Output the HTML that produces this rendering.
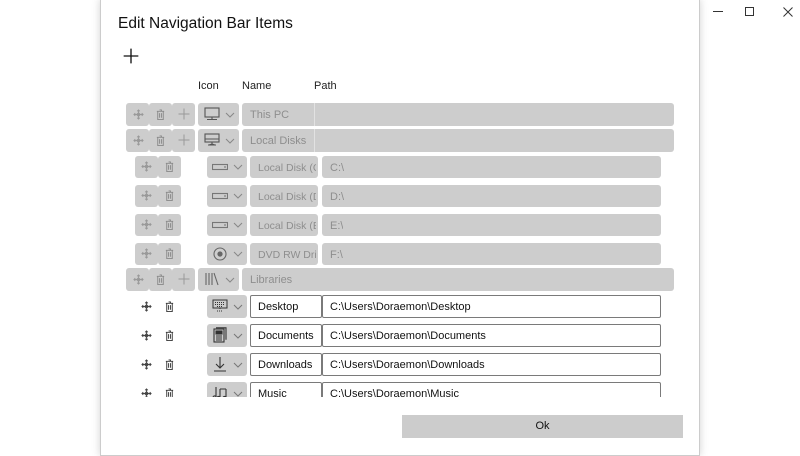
<!DOCTYPE html>
<html><head><meta charset="utf-8">
<style>
*{margin:0;padding:0;box-sizing:border-box}
html,body{width:800px;height:456px;overflow:hidden}
body{background:#fff;position:relative;font-family:"Segoe UI","Liberation Sans",sans-serif}
.dlg{position:absolute;left:100px;top:-1px;width:600px;height:457px;background:#fff;border:1px solid #ccc;box-shadow:0 0 8px rgba(0,0,0,.18)}
.a{position:absolute}
.g{position:absolute;background:#cdcdcd;border-radius:3px}
.t{position:absolute;font-size:11px;color:#8e8e8e;white-space:nowrap;overflow:hidden}
.w{position:absolute;background:#fff;border:1px solid #7a7a7a;border-radius:2px;font-size:11px;color:#111;padding-left:7px;line-height:23px;white-space:nowrap;overflow:hidden}
svg{position:absolute}
.hd{position:absolute;font-size:11px;color:#222}
</style></head><body>
<svg width="0" height="0" style="position:absolute">
<defs>
<symbol id="mv" viewBox="0 0 12 12"><g fill="none" stroke="currentColor" stroke-width="1"><path d="M6 1v10M1 6h10M4.5 2.5L6 1l1.5 1.5M4.5 9.5L6 11l1.5-1.5M2.5 4.5L1 6l1.5 1.5M9.5 4.5L11 6l-1.5 1.5"/><circle cx="6" cy="6" r="1.6"/></g></symbol>
<symbol id="tr" viewBox="0 0 12 12"><g fill="none" stroke="currentColor" stroke-width="1"><path d="M3 2.5h6v9H3zM2 2.5h8M5 1h2v1.5M5 4.5v5M7 4.5v5"/></g></symbol>
<symbol id="pl" viewBox="0 0 12 12"><path d="M6 0.5v11M0.5 6h11" stroke="currentColor" stroke-width="1" fill="none"/></symbol>
<symbol id="cv" viewBox="0 0 10 6"><path d="M1 1l4 4 4-4" stroke="currentColor" stroke-width="1" fill="none"/></symbol>
<symbol id="pc" viewBox="0 0 16 14"><g fill="none" stroke="currentColor" stroke-width="1.1"><rect x="1" y="1" width="14" height="9"/><path d="M8 10v2M3 12.5h10"/></g></symbol>
<symbol id="ld" viewBox="0 0 16 14"><g fill="none" stroke="currentColor" stroke-width="1.1"><rect x="1" y="1" width="14" height="8"/><path d="M1 6h14M8 9v2M4 12h8M8 11l-3 1M8 11l3 1"/></g></symbol>
<symbol id="hd" viewBox="0 0 16 8"><g fill="none" stroke="currentColor" stroke-width="1.1"><rect x="0.5" y="1.5" width="15" height="5"/><path d="M12 4h2"/></g></symbol>
<symbol id="dv" viewBox="0 0 14 14"><circle cx="7" cy="7" r="6" fill="none" stroke="currentColor" stroke-width="1.1"/><circle cx="7" cy="7" r="2.6" fill="currentColor"/></symbol>
<symbol id="lb" viewBox="0 0 16 14"><g fill="none" stroke="currentColor" stroke-width="1.1"><path d="M2 1v12M5 1v12M8 1v12M10 1l4 12"/></g></symbol>
<symbol id="kb" viewBox="0 0 16 14"><g fill="none" stroke="#333" stroke-width="1"><rect x="1" y="1" width="14" height="8"/><path d="M3 3.5h10M3 5.5h10M5 7.5h6M8 9v2M5 12h6" stroke-dasharray="1 1"/></g></symbol>
<symbol id="dc" viewBox="0 0 14 16"><g fill="none" stroke="#333" stroke-width="1.1"><rect x="1" y="2" width="10" height="13"/><path d="M3 0.8h10v12"/><rect x="3" y="4" width="6" height="3" fill="#333"/><path d="M3 9h6M3 11h6M3 13h6"/></g></symbol>
<symbol id="dl" viewBox="0 0 14 16"><g fill="none" stroke="#333" stroke-width="1.1"><path d="M7 1v11M3 8l4 4 4-4M1 15h12"/></g></symbol>
<symbol id="mu" viewBox="0 0 16 16"><g fill="none" stroke="#333" stroke-width="1.1"><path d="M4 2v10M8 4v9M14 4v9M8 4h6"/><circle cx="2.6" cy="12.5" r="1.6"/><circle cx="6.6" cy="13" r="1.6"/><circle cx="12.6" cy="13" r="1.6"/></g></symbol>
</defs></svg>

<div class="dlg"></div>
<div class="a" style="left:118px;top:15px;font-size:15.5px;color:#111">Edit Navigation Bar Items</div>
<svg style="left:123px;top:48px;color:#111" width="16" height="16"><use href="#pl"/></svg>
<div class="hd" style="left:198px;top:80px">Icon</div>
<div class="hd" style="left:242px;top:80px">Name</div>
<div class="hd" style="left:314px;top:80px">Path</div>

<!-- This PC -->
<div class="g" style="left:126px;top:103px;width:23px;height:23px"></div>
<div class="g" style="left:149px;top:103px;width:23px;height:23px"></div>
<div class="g" style="left:172px;top:103px;width:23px;height:23px"></div>
<svg style="left:133px;top:109px;color:#999" width="11" height="11"><use href="#mv"/></svg>
<svg style="left:155px;top:109px;color:#888" width="11" height="11"><use href="#tr"/></svg>
<svg style="left:178px;top:108px;color:#999" width="12" height="12"><use href="#pl"/></svg>
<div class="g" style="left:198px;top:103px;width:41px;height:23px"></div>
<svg style="left:204px;top:107px;color:#555" width="16" height="14"><use href="#pc"/></svg>
<svg style="left:225px;top:112px;color:#888" width="10" height="6"><use href="#cv"/></svg>
<div class="g" style="left:242px;top:103px;width:432px;height:23px"></div>
<div class="a" style="left:314px;top:103px;width:1px;height:23px;background:#e2e2e2"></div>
<div class="t" style="left:250px;top:109px">This PC</div>

<!-- Local Disks -->
<div class="g" style="left:126px;top:129px;width:23px;height:23px"></div>
<div class="g" style="left:149px;top:129px;width:23px;height:23px"></div>
<div class="g" style="left:172px;top:129px;width:23px;height:23px"></div>
<svg style="left:133px;top:135px;color:#999" width="11" height="11"><use href="#mv"/></svg>
<svg style="left:155px;top:135px;color:#888" width="11" height="11"><use href="#tr"/></svg>
<svg style="left:178px;top:134px;color:#999" width="12" height="12"><use href="#pl"/></svg>
<div class="g" style="left:198px;top:129px;width:41px;height:23px"></div>
<svg style="left:204px;top:133px;color:#555" width="16" height="14"><use href="#ld"/></svg>
<svg style="left:225px;top:138px;color:#888" width="10" height="6"><use href="#cv"/></svg>
<div class="g" style="left:242px;top:129px;width:432px;height:23px"></div>
<div class="a" style="left:314px;top:129px;width:1px;height:23px;background:#e2e2e2"></div>
<div class="t" style="left:250px;top:135px">Local Disks</div>

<!-- child disk rows -->
<div class="g" style="left:135px;top:156px;width:23px;height:22px"></div><div class="g" style="left:158px;top:156px;width:23px;height:22px"></div>
<svg style="left:141px;top:161px;color:#999" width="11" height="11"><use href="#mv"/></svg><svg style="left:164px;top:161px;color:#888" width="11" height="11"><use href="#tr"/></svg>
<div class="g" style="left:207px;top:156px;width:40px;height:22px"></div>
<svg style="left:212px;top:163px;color:#777" width="16" height="8"><use href="#hd"/></svg><svg style="left:233px;top:164px;color:#888" width="10" height="6"><use href="#cv"/></svg>
<div class="g" style="left:250px;top:156px;width:68px;height:22px"></div><div class="g" style="left:322px;top:156px;width:339px;height:22px"></div>
<div class="t" style="left:258px;top:162px;width:58px;font-size:10.5px">Local Disk (C:</div><div class="t" style="left:330px;top:162px">C:\</div>

<div class="g" style="left:135px;top:185px;width:23px;height:22px"></div><div class="g" style="left:158px;top:185px;width:23px;height:22px"></div>
<svg style="left:141px;top:190px;color:#999" width="11" height="11"><use href="#mv"/></svg><svg style="left:164px;top:190px;color:#888" width="11" height="11"><use href="#tr"/></svg>
<div class="g" style="left:207px;top:185px;width:40px;height:22px"></div>
<svg style="left:212px;top:192px;color:#777" width="16" height="8"><use href="#hd"/></svg><svg style="left:233px;top:193px;color:#888" width="10" height="6"><use href="#cv"/></svg>
<div class="g" style="left:250px;top:185px;width:68px;height:22px"></div><div class="g" style="left:322px;top:185px;width:339px;height:22px"></div>
<div class="t" style="left:258px;top:191px;width:58px;font-size:10.5px">Local Disk (D:</div><div class="t" style="left:330px;top:191px">D:\</div>

<div class="g" style="left:135px;top:214px;width:23px;height:22px"></div><div class="g" style="left:158px;top:214px;width:23px;height:22px"></div>
<svg style="left:141px;top:219px;color:#999" width="11" height="11"><use href="#mv"/></svg><svg style="left:164px;top:219px;color:#888" width="11" height="11"><use href="#tr"/></svg>
<div class="g" style="left:207px;top:214px;width:40px;height:22px"></div>
<svg style="left:212px;top:221px;color:#777" width="16" height="8"><use href="#hd"/></svg><svg style="left:233px;top:222px;color:#888" width="10" height="6"><use href="#cv"/></svg>
<div class="g" style="left:250px;top:214px;width:68px;height:22px"></div><div class="g" style="left:322px;top:214px;width:339px;height:22px"></div>
<div class="t" style="left:258px;top:220px;width:58px;font-size:10.5px">Local Disk (E:)</div><div class="t" style="left:330px;top:220px">E:\</div>

<div class="g" style="left:135px;top:243px;width:23px;height:22px"></div><div class="g" style="left:158px;top:243px;width:23px;height:22px"></div>
<svg style="left:141px;top:248px;color:#999" width="11" height="11"><use href="#mv"/></svg><svg style="left:164px;top:248px;color:#888" width="11" height="11"><use href="#tr"/></svg>
<div class="g" style="left:207px;top:243px;width:40px;height:22px"></div>
<svg style="left:213px;top:247px;color:#666" width="14" height="14"><use href="#dv"/></svg><svg style="left:233px;top:251px;color:#888" width="10" height="6"><use href="#cv"/></svg>
<div class="g" style="left:250px;top:243px;width:68px;height:22px"></div><div class="g" style="left:322px;top:243px;width:339px;height:22px"></div>
<div class="t" style="left:258px;top:249px;width:58px;font-size:10.5px">DVD RW Drive</div><div class="t" style="left:330px;top:249px">F:\</div>

<!-- Libraries -->
<div class="g" style="left:126px;top:268px;width:23px;height:23px"></div>
<div class="g" style="left:149px;top:268px;width:23px;height:23px"></div>
<div class="g" style="left:172px;top:268px;width:23px;height:23px"></div>
<svg style="left:133px;top:274px;color:#999" width="11" height="11"><use href="#mv"/></svg>
<svg style="left:155px;top:274px;color:#888" width="11" height="11"><use href="#tr"/></svg>
<svg style="left:178px;top:273px;color:#999" width="12" height="12"><use href="#pl"/></svg>
<div class="g" style="left:198px;top:268px;width:41px;height:23px"></div>
<svg style="left:204px;top:272px;color:#666" width="16" height="14"><use href="#lb"/></svg>
<svg style="left:225px;top:277px;color:#888" width="10" height="6"><use href="#cv"/></svg>
<div class="g" style="left:242px;top:268px;width:432px;height:23px"></div>
<div class="t" style="left:250px;top:274px">Libraries</div>

<!-- library children (clipped) -->
<div class="a" style="left:0;top:292px;width:800px;height:105px;overflow:hidden">
 <div class="a" style="left:0;top:-292px;width:800px;height:456px">
  <svg style="left:141px;top:301px;color:#444" width="11" height="11"><use href="#mv"/></svg><svg style="left:164px;top:301px;color:#333" width="11" height="11"><use href="#tr"/></svg>
  <div class="g" style="left:207px;top:295px;width:40px;height:23px"></div>
  <svg style="left:212px;top:299px" width="16" height="14"><use href="#kb"/></svg><svg style="left:233px;top:304px;color:#777" width="10" height="6"><use href="#cv"/></svg>
  <div class="w" style="left:250px;top:295px;width:72px;height:23px">Desktop</div>
  <div class="w" style="left:322px;top:295px;width:339px;height:23px">C:\Users\Doraemon\Desktop</div>

  <svg style="left:141px;top:330px;color:#444" width="11" height="11"><use href="#mv"/></svg><svg style="left:164px;top:330px;color:#333" width="11" height="11"><use href="#tr"/></svg>
  <div class="g" style="left:207px;top:324px;width:40px;height:23px"></div>
  <svg style="left:213px;top:327px" width="14" height="16"><use href="#dc"/></svg><svg style="left:233px;top:333px;color:#777" width="10" height="6"><use href="#cv"/></svg>
  <div class="w" style="left:250px;top:324px;width:72px;height:23px">Documents</div>
  <div class="w" style="left:322px;top:324px;width:339px;height:23px">C:\Users\Doraemon\Documents</div>

  <svg style="left:141px;top:359px;color:#444" width="11" height="11"><use href="#mv"/></svg><svg style="left:164px;top:359px;color:#333" width="11" height="11"><use href="#tr"/></svg>
  <div class="g" style="left:207px;top:353px;width:40px;height:23px"></div>
  <svg style="left:213px;top:356px" width="14" height="16"><use href="#dl"/></svg><svg style="left:233px;top:362px;color:#777" width="10" height="6"><use href="#cv"/></svg>
  <div class="w" style="left:250px;top:353px;width:72px;height:23px">Downloads</div>
  <div class="w" style="left:322px;top:353px;width:339px;height:23px">C:\Users\Doraemon\Downloads</div>

  <svg style="left:141px;top:388px;color:#444" width="11" height="11"><use href="#mv"/></svg><svg style="left:164px;top:388px;color:#333" width="11" height="11"><use href="#tr"/></svg>
  <div class="g" style="left:207px;top:382px;width:40px;height:23px"></div>
  <svg style="left:212px;top:385px" width="16" height="16"><use href="#mu"/></svg><svg style="left:233px;top:391px;color:#777" width="10" height="6"><use href="#cv"/></svg>
  <div class="w" style="left:250px;top:382px;width:72px;height:23px">Music</div>
  <div class="w" style="left:322px;top:382px;width:339px;height:23px">C:\Users\Doraemon\Music</div>
 </div>
</div>

<div class="a" style="left:402px;top:415px;width:281px;height:23px;background:#cccccc;font-size:11px;color:#111;text-align:center;line-height:23px">Ok</div>

<!-- window controls -->
<div class="a" style="left:713px;top:11px;width:10px;height:1px;background:#333"></div>
<div class="a" style="left:745px;top:7px;width:9px;height:9px;border:1px solid #333"></div>
<svg style="left:783px;top:7px" width="10" height="10"><path d="M0.5 0.5l9 9M9.5 0.5l-9 9" stroke="#333" stroke-width="1"/></svg>
</body></html>
